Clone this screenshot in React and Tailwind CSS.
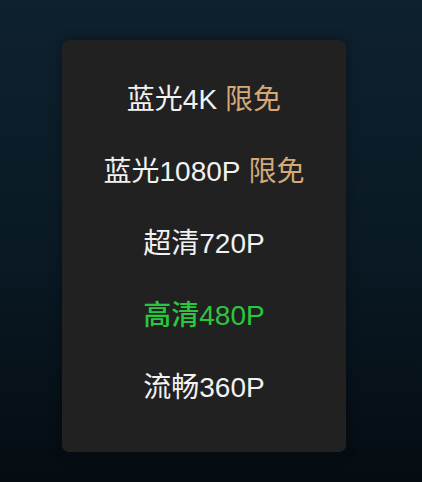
import React from 'react';

const options = [
  { label: '蓝光4K', tag: '限免' },
  { label: '蓝光1080P', tag: '限免' },
  { label: '超清720P' },
  { label: '高清480P', active: true },
  { label: '流畅360P' },
];

export default function App() {
  return (
    <div
      className="w-[422px] h-[482px] overflow-hidden bg-gradient-to-b from-[#0e212e] via-[#0a1a25] to-[#050c12] flex pl-[62px] pt-[40px]"
      style={{ fontFamily: '"Liberation Sans", "Noto Sans CJK SC", sans-serif' }}
    >
      {/* quality menu */}
      <div className="w-[284px] h-[412px] rounded-[7px] bg-[#212122] shadow-[0_0_12px_rgba(0,0,0,0.35)] flex flex-col pt-[24px]">
        {options.map((o) => (
          <div
            key={o.label}
            className={`h-[72px] flex items-center justify-center text-[28px] leading-none ${
              o.active ? 'text-[#2bc63f] font-medium' : 'text-[#f2f2f2]'
            }`}
          >
            <span>{o.label}</span>
            {o.tag && <span className="ml-[8px] text-[#d5a976]">{o.tag}</span>}
          </div>
        ))}
      </div>
    </div>
  );
}
